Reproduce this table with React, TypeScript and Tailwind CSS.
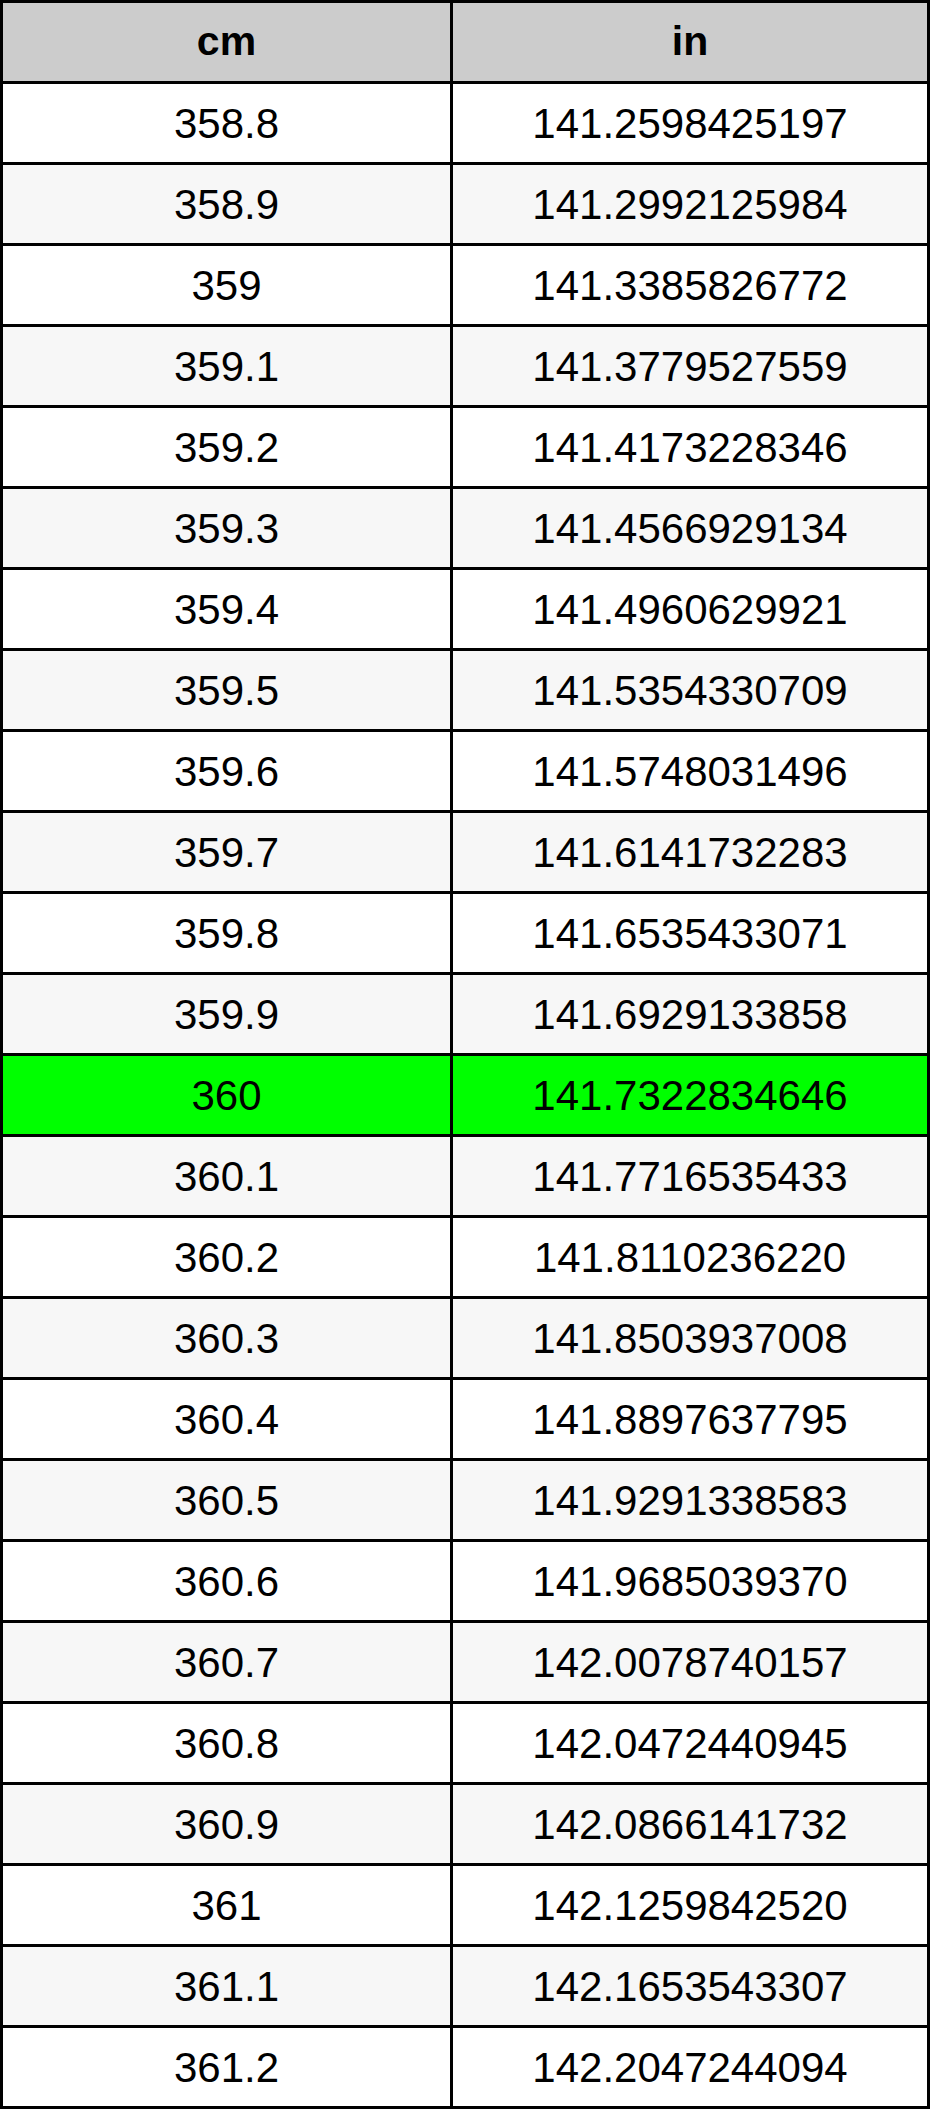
import React from 'react';

const rows: [string, string][] = [
  ['358.8', '141.2598425197'],
  ['358.9', '141.2992125984'],
  ['359', '141.3385826772'],
  ['359.1', '141.3779527559'],
  ['359.2', '141.4173228346'],
  ['359.3', '141.4566929134'],
  ['359.4', '141.4960629921'],
  ['359.5', '141.5354330709'],
  ['359.6', '141.5748031496'],
  ['359.7', '141.6141732283'],
  ['359.8', '141.6535433071'],
  ['359.9', '141.6929133858'],
  ['360', '141.7322834646'],
  ['360.1', '141.7716535433'],
  ['360.2', '141.8110236220'],
  ['360.3', '141.8503937008'],
  ['360.4', '141.8897637795'],
  ['360.5', '141.9291338583'],
  ['360.6', '141.9685039370'],
  ['360.7', '142.0078740157'],
  ['360.8', '142.0472440945'],
  ['360.9', '142.0866141732'],
  ['361', '142.1259842520'],
  ['361.1', '142.1653543307'],
  ['361.2', '142.2047244094'],
];

export default function App() {
  return (
    <div className="w-[930px] bg-white font-['Liberation_Sans',Arial,sans-serif] text-black">
      <div className="grid grid-cols-[447px_474px] gap-[3px] bg-black p-[3px]">
        {/* header */}
        <div className="h-[78px] bg-[#cccccc] flex items-center justify-center text-[41px] font-bold">cm</div>
        <div className="h-[78px] bg-[#cccccc] flex items-center justify-center text-[41px] font-bold">in</div>

        {rows.map(([cm, inch], i) => {
          const bg = cm === '360' ? 'bg-[#00ff00]' : i % 2 === 0 ? 'bg-white' : 'bg-[#f7f7f7]';
          return (
            <React.Fragment key={cm}>
              <div className={`h-[78px] ${bg} flex items-center justify-center text-[42px]`}>{cm}</div>
              <div className={`h-[78px] ${bg} flex items-center justify-center text-[42px]`}>{inch}</div>
            </React.Fragment>
          );
        })}
      </div>
    </div>
  );
}
